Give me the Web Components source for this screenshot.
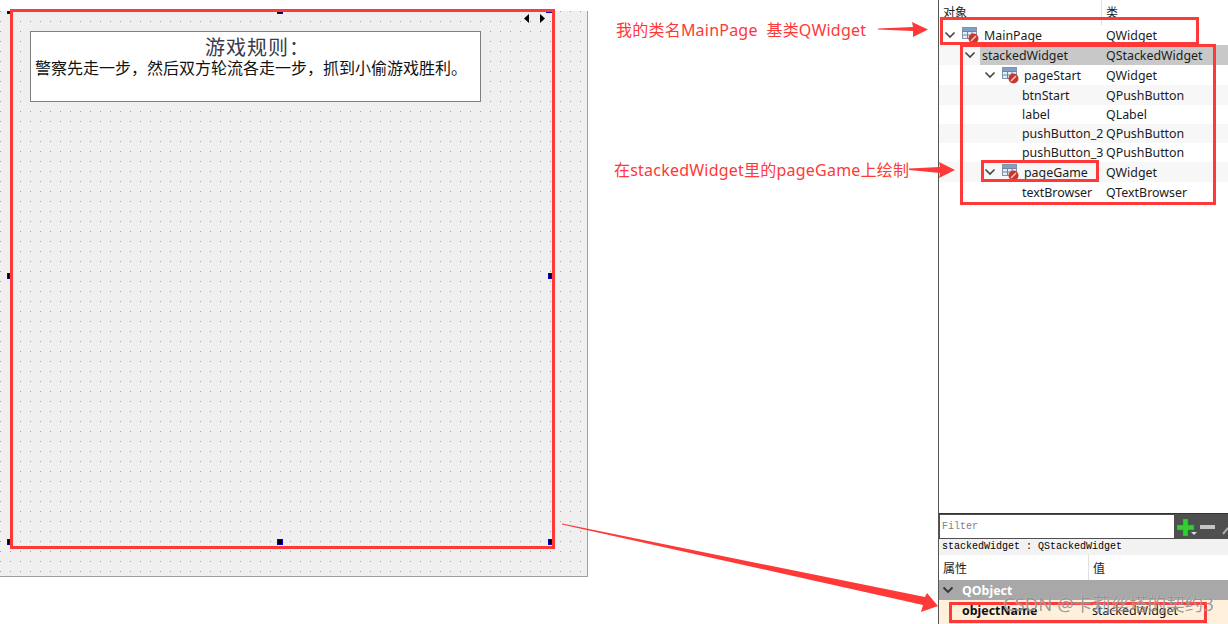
<!DOCTYPE html>
<html lang="zh">
<head>
<meta charset="utf-8">
<title>MainPage</title>
<style>
    html, body { margin: 0; padding: 0; background: #fff; overflow: hidden; }
    body { font-family: "Noto Sans", "Noto Sans CJK SC", sans-serif; font-size: 12.400px; color: #1a1a1a; }
</style>
</head>
<body>
<designer-page>
    <form-canvas slot="left"></form-canvas>
    <side-panel slot="right">
        <tree-header slot="top"></tree-header>
        <tree-row slot="top" pad="5" chevron icon type="QWidget">MainPage</tree-row>
        <tree-row slot="top" pad="25" chevron selected alt type="QStackedWidget">stackedWidget</tree-row>
        <tree-row slot="top" pad="45" chevron icon type="QWidget">pageStart</tree-row>
        <tree-row slot="top" pad="83" alt type="QPushButton">btnStart</tree-row>
        <tree-row slot="top" pad="83" h="19" type="QLabel">label</tree-row>
        <tree-row slot="top" pad="83" alt h="19" type="QPushButton">pushButton_2</tree-row>
        <tree-row slot="top" pad="83" h="19" type="QPushButton">pushButton_3</tree-row>
        <tree-row slot="top" pad="45" alt chevron icon type="QWidget">pageGame</tree-row>
        <tree-row slot="top" pad="83" type="QTextBrowser">textBrowser</tree-row>
        <filter-bar slot="bottom"></filter-bar>
        <property-panel slot="bottom"></property-panel>
    </side-panel>
    <red-frame slot="overlay" x="10" y="9" w="545" h="540"></red-frame>
    <red-frame slot="overlay" x="940" y="17" w="259" h="28"></red-frame>
    <red-frame slot="overlay" x="960" y="44" w="256" h="161"></red-frame>
    <red-frame slot="overlay" x="981" y="160" w="118" h="22"></red-frame>
    <red-frame slot="overlay" x="949" y="602" w="258" h="21"></red-frame>
    <red-note slot="overlay" x="616" y="18">我的类名MainPage  基类QWidget</red-note>
    <red-note slot="overlay" x="614" y="158">在stackedWidget里的pageGame上绘制</red-note>
    <arrow-layer slot="overlay"></arrow-layer>
    <water-mark slot="overlay">CSDN @卡莉丝塔的契约3</water-mark>
</designer-page>

<script>
const RED = '#ff3838';
const SANS = '"Noto Sans", "Noto Sans CJK SC", sans-serif';

class DesignerPage extends HTMLElement {
    constructor() {
        super();
        this.attachShadow({ mode: 'open' }).innerHTML = `
        <style>
            :host { display: flex; position: relative; width: 1228px; height: 624px; overflow: hidden; }
            .left { display: block; width: 938px; flex: none; }
            .right { display: flex; flex: 1; min-width: 0; }
            .overlay { position: absolute; inset: 0; pointer-events: none; }
        </style>
        <div class="left"><slot name="left"></slot></div>
        <div class="right"><slot name="right"></slot></div>
        <div class="overlay"><slot name="overlay"></slot></div>
        `;
    }
}

class FormCanvas extends HTMLElement {
    constructor() {
        super();
        const handles = [
            [7, 0, 3, 3], [277, 0, 6, 3], [546, 0, 6, 2],
            [7, 262, 3, 6], [548, 262, 4, 6],
            [7, 528, 3, 6], [277, 528, 6, 6], [548, 528, 4, 6]
        ].map(([x, y, w, h]) =>
            `<i class="handle" style="left:${x}px;top:${y}px;width:${w}px;height:${h}px"></i>`).join('');
        this.attachShadow({ mode: 'open' }).innerHTML = `
        <style>
            :host {
                display: block;
                position: relative;
                box-sizing: border-box;
                width: 588px;
                height: 566px;
                margin-top: 11px;
                padding: 20px 0 0 30px;
                background-color: #efefef;
                background-image: radial-gradient(circle at 0.5px 0.5px, #a0a0a0 0.6px, transparent 0.8px);
                background-size: 10px 10px;
                border-right: 1px solid #a0a0a0;
                border-bottom: 1px solid #a0a0a0;
            }
            .rules {
                box-sizing: border-box;
                width: 451px;
                height: 71px;
                background: #fff;
                border: 1px solid #808080;
                padding: 0 0 0 4px;
                font-family: "Noto Sans CJK SC", sans-serif;
                color: #111;
            }
            h1 {
                margin: 4px 0 1px;
                font-size: 20px;
                line-height: 21px;
                font-weight: 400;
                letter-spacing: 1px;
                text-align: center;
                color: #3a3a4a;
            }
            p { margin: 0; font-size: 16px; line-height: 18px; white-space: nowrap; }
            .handle { position: absolute; box-sizing: border-box; background: #000; border: 1px solid #0000d0; }
            .nav { position: absolute; top: 3px; left: 523px; }
        </style>
        <div class="rules">
            <h1>游戏规则：</h1>
            <p>警察先走一步，然后双方轮流各走一步，抓到小偷游戏胜利。</p>
        </div>
        ${handles}
        <svg class="nav" width="24" height="10" viewBox="0 0 24 10">
            <path d="M6 0v9L1 4.500z M17 0v9l5-4.500z" fill="#000"/>
        </svg>
        `;
    }
}

class SidePanel extends HTMLElement {
    constructor() {
        super();
        this.attachShadow({ mode: 'open' }).innerHTML = `
        <style>
            :host {
                display: flex;
                flex-direction: column;
                box-sizing: border-box;
                width: 290px;
                height: 624px;
                border-left: 1px solid #555;
                background: #fff;
            }
            .top { flex: 1; min-height: 0; }
        </style>
        <div class="top"><slot name="top"></slot></div>
        <slot name="bottom"></slot>
        `;
    }
}

class TreeHeader extends HTMLElement {
    constructor() {
        super();
        this.attachShadow({ mode: 'open' }).innerHTML = `
        <style>
            :host { display: flex; height: 25px; font-size: 12px; line-height: 25px; color: #222; font-family: "Noto Sans CJK SC", sans-serif; }
            div { box-sizing: border-box; padding-left: 4px; line-height: 23px; }
            .name { width: 163px; border-right: 1px solid #e0e0e0; }
        </style>
        <div class="name">对象</div>
        <div>类</div>
        `;
    }
}

class TreeRow extends HTMLElement {
    connectedCallback() {
        if (this.rendered) return;
        this.rendered = true;
        const pad = this.getAttribute('pad') || 0;
        const h = Number(this.getAttribute('h') || 20);
        // the 20px rows sit their text one pixel lower than the 19px ones
        const drop = h === 20 ? 1 : 0;
        const chevron = this.hasAttribute('chevron')
            ? `<svg class="chev" width="12" height="12" viewBox="0 0 12 12"><path d="M1.500 3.500 6 8l4.500-4.500" fill="none" stroke="#444" stroke-width="1.600"/></svg>`
            : '';
        const icon = this.hasAttribute('icon')
            ? `<svg class="icon" width="18" height="17" viewBox="0 0 18 17">
                 <rect x="0.500" y="0.500" width="14" height="11" fill="#e6edf5" stroke="#7f93aa"/>
                 <rect x="1" y="1" width="13" height="3" fill="#7fa0c4"/>
                 <path d="M0.500 4.500h14M0.500 8h14M5.500 4.500v7M10 4.500v7" stroke="#6f86a3" fill="none"/>
                 <circle cx="11.500" cy="11.500" r="5" fill="#c8362c"/>
                 <path d="M9 14 14 9" stroke="#f4d0c8" stroke-width="1.400"/>
               </svg>`
            : '';
        this.attachShadow({ mode: 'open' }).innerHTML = `
        <style>
            :host { display: flex; height: ${h}px; color: #1c1c1c; }
            :host([alt]) { background: #f7f7f7; }
            .name { display: flex; align-items: center; box-sizing: border-box; width: 163px; padding-left: ${pad}px; white-space: nowrap; }
            .chev { flex: none; margin-right: 6px; }
            .icon { flex: none; margin-right: 4px; }
            .label, .type { box-sizing: border-box; height: ${h}px; padding-top: ${drop}px; line-height: ${h - drop}px; }
            .type { flex: 1; padding-left: 4px; white-space: nowrap; }
            :host([selected]) .type, :host([selected]) .label { background: #c8c8c8; }
            :host([selected]) .label { flex: 1; margin-left: -2px; padding-left: 2px; }
        </style>
        <div class="name">${chevron}${icon}<span class="label"><slot></slot></span></div>
        <div class="type">${this.getAttribute('type')}</div>
        `;
    }
}

class FilterBar extends HTMLElement {
    constructor() {
        super();
        this.attachShadow({ mode: 'open' }).innerHTML = `
        <style>
            :host { display: flex; align-items: center; height: 26px; background: #4f4f4f; padding-left: 1px; border-top: 1px solid #333; box-sizing: border-box; overflow: hidden; }
            .input {
                flex: none;
                box-sizing: border-box;
                width: 234px;
                height: 23px;
                background: #fff;
                padding-left: 2px;
                font: 10px/23px "Liberation Mono", monospace;
                color: #808080;
            }
            svg { margin-left: 3px; flex: none; }
        </style>
        <div class="input">Filter</div>
        <svg width="54" height="20" viewBox="0 0 54 20">
            <path d="M6 2h5v6h6v5h-6v6H6v-6H0V8h6z" fill="#2fd02f" stroke="#1c9a1c" stroke-width="0.500"/>
            <path d="M14 15h6l-3 3z" fill="#ddd"/>
            <rect x="23" y="8" width="15" height="4" fill="#c4c4c4"/>
            <path d="M46 17l5-6" stroke="#aaa" stroke-width="2"/>
        </svg>
        `;
    }
}

class PropertyPanel extends HTMLElement {
    constructor() {
        super();
        this.attachShadow({ mode: 'open' }).innerHTML = `
        <style>
            :host { display: block; }
            .title { height: 16px; background: #f2f2f2; font: 10px/16px "Liberation Mono", monospace; color: #000; padding-left: 3px; white-space: pre; }
            .head { display: flex; height: 25px; line-height: 25px; font-size: 12px; font-family: "Noto Sans CJK SC", sans-serif; color: #222; }
            .head div { padding-left: 4px; box-sizing: border-box; }
            .head .k { width: 150px; border-right: 1px solid #e0e0e0; }
            .group { display: flex; align-items: center; height: 20px; background: #a8a8a8; color: #fff; font-weight: 700; padding-left: 3px; }
            .group svg { margin-right: 8px; }
            .row { display: flex; height: 24px; line-height: 22px; background: #fff0dc; color: #111; }
            .row .k { box-sizing: border-box; width: 150px; padding-left: 23px; font-weight: 700; }
            .row .v { padding-left: 3px; }
        </style>
        <div class="title">stackedWidget : QStackedWidget</div>
        <div class="head"><div class="k">属性</div><div>值</div></div>
        <div class="group">
            <svg width="12" height="12" viewBox="0 0 12 12"><path d="M1.500 3.500 6 8l4.500-4.500" fill="none" stroke="#333" stroke-width="1.800"/></svg>
            QObject
        </div>
        <div class="row"><div class="k">objectName</div><div class="v">stackedWidget</div></div>
        `;
    }
}

class RedFrame extends HTMLElement {
    connectedCallback() {
        if (this.shadowRoot) return;
        const a = n => this.getAttribute(n);
        this.attachShadow({ mode: 'open' }).innerHTML = `
        <style>
            :host {
                position: absolute;
                box-sizing: border-box;
                left: ${a('x')}px; top: ${a('y')}px; width: ${a('w')}px; height: ${a('h')}px;
                border: 3px solid ${RED};
            }
        </style>
        `;
    }
}

class RedNote extends HTMLElement {
    connectedCallback() {
        if (this.shadowRoot) return;
        this.attachShadow({ mode: 'open' }).innerHTML = `
        <style>
            :host {
                position: absolute;
                left: ${this.getAttribute('x')}px; top: ${this.getAttribute('y')}px;
                font: 16px/24px ${SANS};
                color: ${RED};
                letter-spacing: 0.22px;
            }
            span { white-space: pre; }
        </style>
        <span><slot></slot></span>
        `;
    }
}

class ArrowLayer extends HTMLElement {
    constructor() {
        super();
        this.attachShadow({ mode: 'open' }).innerHTML = `
        <style>
            :host { position: absolute; inset: 0; }
            svg { display: block; }
        </style>
        <svg width="1228" height="624" viewBox="0 0 1228 624" fill="${RED}">
            <path d="M878 28.500 913 27 912 22 928 29.500 913 37 913 31 878 29.500z"/>
            <path d="M909 168.500 940 167 939 162 955 170 939 178 940 173 909 170z"/>
            <path d="M562 523.500 925 597 927 593 938 606 921 612 923 605 562 524.500z"/>
        </svg>
        `;
    }
}

class WaterMark extends HTMLElement {
    constructor() {
        super();
        this.attachShadow({ mode: 'open' }).innerHTML = `
        <style>
            :host {
                position: absolute;
                left: 1003px; top: 591px;
                font: 18.500px/26px ${SANS};
                color: rgba(100, 100, 100, 0.65);
                text-shadow: 0 0 1px rgba(255, 255, 255, 0.8);
                white-space: nowrap;
            }
        </style>
        <slot></slot>
        `;
    }
}

customElements.define('designer-page', DesignerPage);
customElements.define('form-canvas', FormCanvas);
customElements.define('side-panel', SidePanel);
customElements.define('tree-header', TreeHeader);
customElements.define('tree-row', TreeRow);
customElements.define('filter-bar', FilterBar);
customElements.define('property-panel', PropertyPanel);
customElements.define('red-frame', RedFrame);
customElements.define('red-note', RedNote);
customElements.define('arrow-layer', ArrowLayer);
customElements.define('water-mark', WaterMark);
</script>
</body>
</html>
